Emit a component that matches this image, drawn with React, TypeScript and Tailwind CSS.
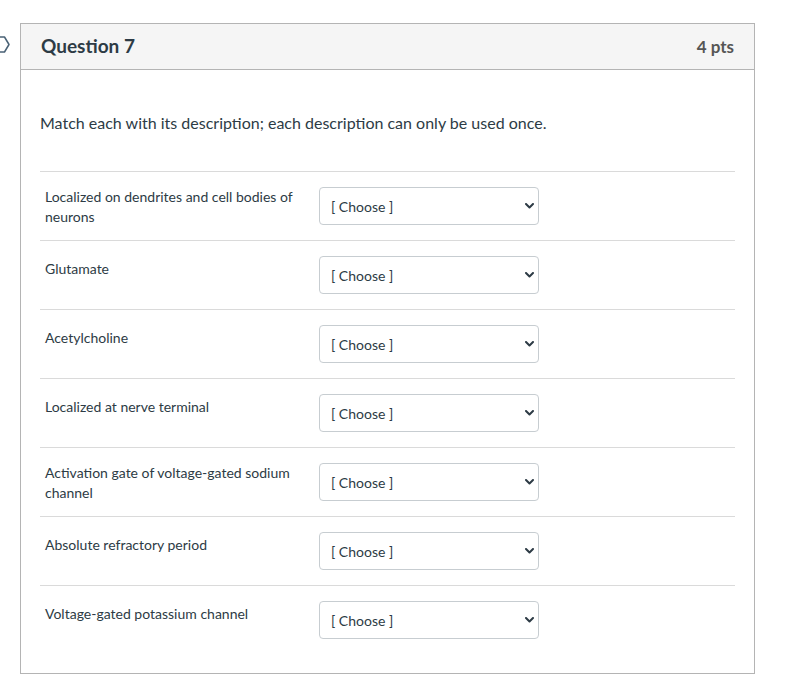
import React from "react";

const rows = [
  { label: "Localized on dendrites and cell bodies of neurons", twoLine: true },
  { label: "Glutamate", twoLine: false },
  { label: "Acetylcholine", twoLine: false },
  { label: "Localized at nerve terminal", twoLine: false },
  { label: "Activation gate of voltage-gated sodium channel", twoLine: true },
  { label: "Absolute refractory period", twoLine: false },
  { label: "Voltage-gated potassium channel", twoLine: false },
];

function Chevron() {
  return (
    <svg width="9" height="6" viewBox="0 0 9 6" className="shrink-0">
      <polyline
        points="1,1 4.5,4.5 8,1"
        fill="none"
        stroke="#2d3b45"
        strokeWidth="2"
        strokeLinecap="round"
        strokeLinejoin="round"
      />
    </svg>
  );
}

function ChooseSelect() {
  return (
    <div className="flex h-[38px] w-[220px] shrink-0 items-center justify-between rounded-[4px] border border-[#c7cdd1] bg-white pl-[11px] pr-[4px]">
      <span className="text-[14px] text-[#2d3b45]">[ Choose ]</span>
      <Chevron />
    </div>
  );
}

export default function App() {
  return (
    <div
      className="min-h-[698px] w-[792px] bg-white pt-[23px]"
      style={{ fontFamily: "Lato, 'Noto Sans', sans-serif" }}
    >
      <div className="flex items-start">
        {/* bookmark marker, mostly cut off by the left edge */}
        <svg width="20" height="18" viewBox="0 0 20 18" className="mt-[13px] shrink-0">
          <path
            d="M-4 1 H4.5 L9 8.5 L4.5 16 H-4"
            fill="none"
            stroke="#4a6276"
            strokeWidth="1.5"
            strokeLinejoin="round"
          />
        </svg>

        <div className="w-[735px] border border-[#b4b4b4]">
          <div className="flex h-[46px] items-center justify-between border-b border-[#b4b4b4] bg-[#f5f5f5] pl-[20px] pr-[20px]">
            <h2 className="text-[19px] font-bold text-[#2d3b45]">Question 7</h2>
            <span className="text-[17px] font-bold text-[#555555]">4 pts</span>
          </div>

          <div className="px-[19px] pb-[19px]">
            <p className="pt-[42px] pb-[37px] text-[16px] leading-[22px] text-[#2d3b45]">
              Match each with its description; each description can only be used once.
            </p>

            {rows.map((row) => (
              <div
                key={row.label}
                className="flex h-[69px] items-start border-t border-[#dadada] pl-[5px]"
              >
                <div
                  className={
                    row.twoLine
                      ? "w-[274px] pr-[20px] pt-[15px] text-[14px] leading-[20px] text-[#2d3b45]"
                      : "w-[274px] pr-[20px] pt-[18px] text-[14px] leading-[20px] text-[#2d3b45]"
                  }
                >
                  {row.label}
                </div>
                <div className="pt-[15px]">
                  <ChooseSelect />
                </div>
              </div>
            ))}
          </div>
        </div>
      </div>
    </div>
  );
}
